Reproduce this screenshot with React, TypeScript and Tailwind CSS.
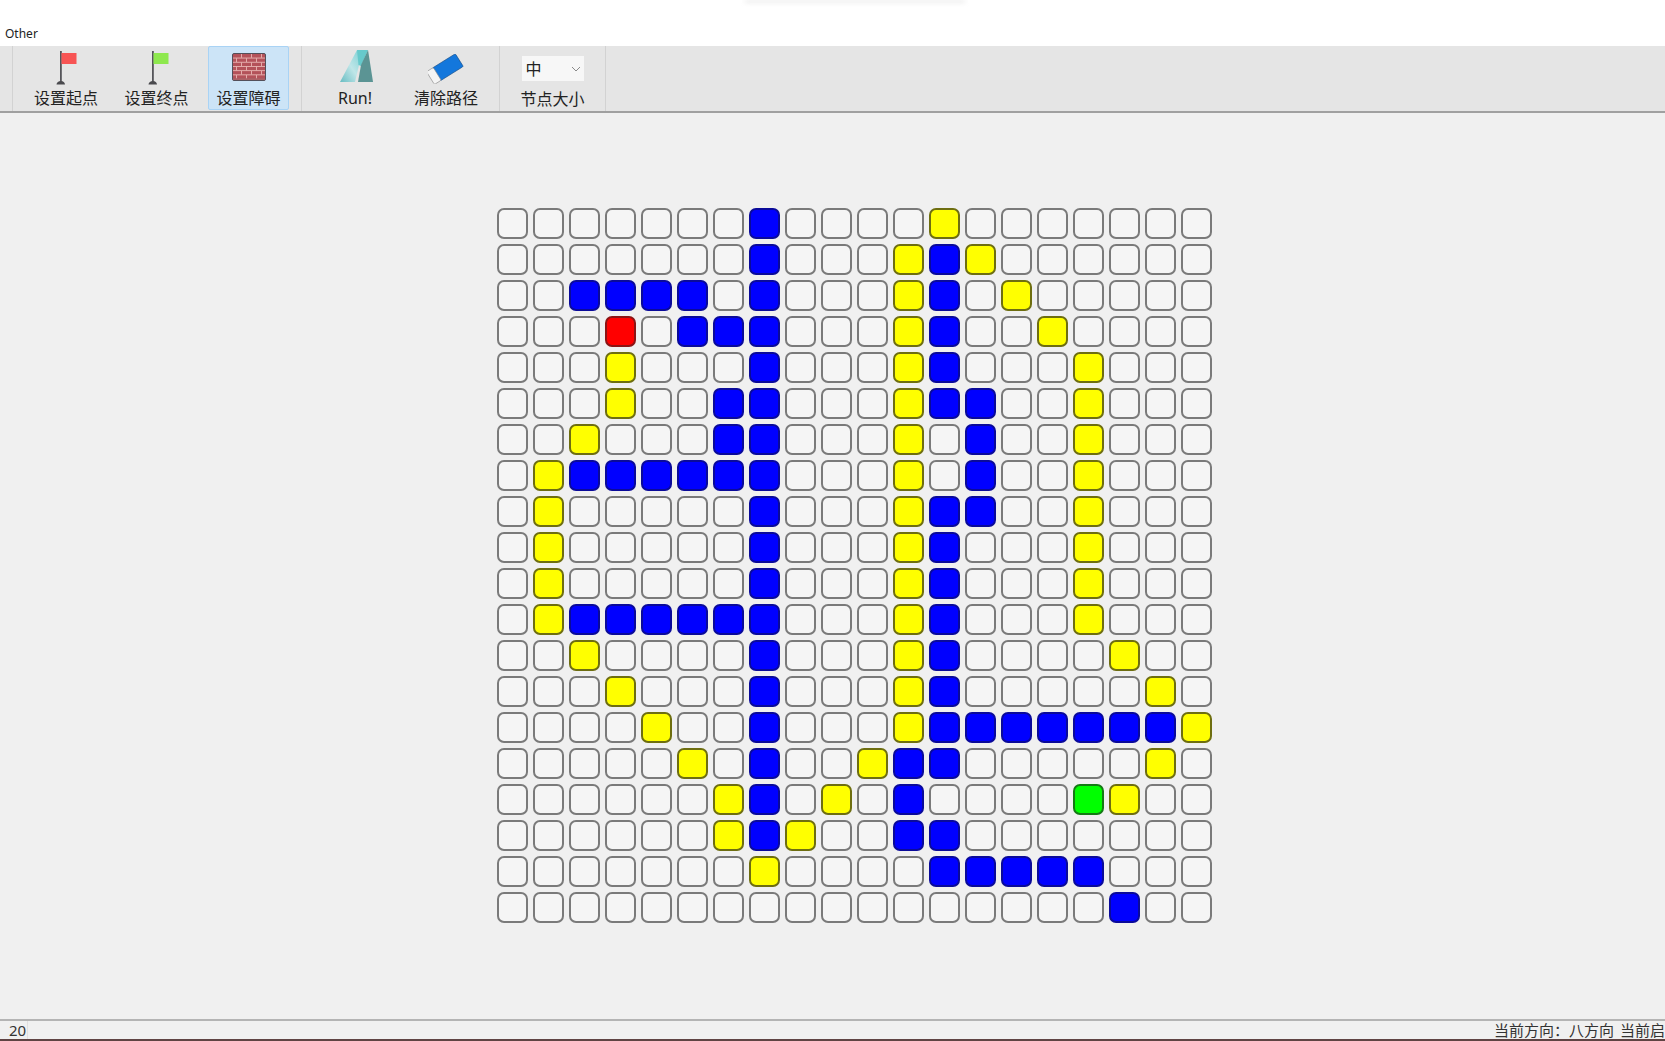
const Y = 'y', B = 'b', R = 'r', G = 'g';

const layout: Record<number, Record<number, string>> = {
  0: { 7: B, 12: Y },
  1: { 7: B, 11: Y, 12: B, 13: Y },
  2: { 2: B, 3: B, 4: B, 5: B, 7: B, 11: Y, 12: B, 14: Y },
  3: { 3: R, 5: B, 6: B, 7: B, 11: Y, 12: B, 15: Y },
  4: { 3: Y, 7: B, 11: Y, 12: B, 16: Y },
  5: { 3: Y, 6: B, 7: B, 11: Y, 12: B, 13: B, 16: Y },
  6: { 2: Y, 6: B, 7: B, 11: Y, 13: B, 16: Y },
  7: { 1: Y, 2: B, 3: B, 4: B, 5: B, 6: B, 7: B, 11: Y, 13: B, 16: Y },
  8: { 1: Y, 7: B, 11: Y, 12: B, 13: B, 16: Y },
  9: { 1: Y, 7: B, 11: Y, 12: B, 16: Y },
  10: { 1: Y, 7: B, 11: Y, 12: B, 16: Y },
  11: { 1: Y, 2: B, 3: B, 4: B, 5: B, 6: B, 7: B, 11: Y, 12: B, 16: Y },
  12: { 2: Y, 7: B, 11: Y, 12: B, 17: Y },
  13: { 3: Y, 7: B, 11: Y, 12: B, 18: Y },
  14: { 4: Y, 7: B, 11: Y, 12: B, 13: B, 14: B, 15: B, 16: B, 17: B, 18: B, 19: Y },
  15: { 5: Y, 7: B, 10: Y, 11: B, 12: B, 18: Y },
  16: { 6: Y, 7: B, 9: Y, 11: B, 16: G, 17: Y },
  17: { 6: Y, 7: B, 8: Y, 11: B, 12: B },
  18: { 7: Y, 12: B, 13: B, 14: B, 15: B, 16: B },
  19: { 17: B },
};

const cellClass: Record<string, string> = {
  e: 'bg-[#f5f5f5] border-[#7a7a7a]',
  y: 'bg-[#ffff00] border-[#6e6e10]',
  b: 'bg-[#0000ff] border-[#0a0a9a]',
  r: 'bg-[#ff0000] border-[#8c1414]',
  g: 'bg-[#00ff00] border-[#147a14]',
};

function Sep() {
  return <div className="w-px self-stretch bg-[#d2d2d2]" />;
}

function Flag({ color }: { color: string }) {
  return (
    <svg width="24" height="34" viewBox="0 0 24 34">
      <rect x="4" y="0" width="1.8" height="33" fill="#55555a" />
      <rect x="5.5" y="2" width="15" height="11" fill={color} />
      <path d="M0.5 33.5 Q1 30 4.9 30 Q8.6 30 9 33.5 Z" fill="#4a4a4e" />
    </svg>
  );
}

function Brick() {
  const rows = [0, 1, 2, 3, 4, 5];
  return (
    <svg width="34" height="28" viewBox="0 0 34 28">
      <rect x="0.5" y="0.5" width="33" height="27" rx="1.5" fill="#b4525a" stroke="#54505a" />
      {rows.map((r) => (
        <rect key={r} x="1" y={4.6 + r * 4.2} width="32" height="0.9" fill="#e9b6b4" />
      ))}
      {rows.map((r) =>
        [0, 1, 2].map((c) => (
          <rect key={`${r}-${c}`} x={(r % 2 ? 4 : 9) + c * 10} y={1 + r * 4.2} width="0.9" height="3.8" fill="#e9b6b4" />
        )),
      )}
      <rect x="1" y="25" width="32" height="2" fill="#8d3f48" opacity="0.5" />
    </svg>
  );
}

function RunLogo() {
  return (
    <svg width="34" height="34" viewBox="0 0 34 34">
      <defs>
        <linearGradient id="runA" x1="0" y1="1" x2="1" y2="0">
          <stop offset="0" stopColor="#68bcc2" />
          <stop offset="0.5" stopColor="#bfe6e8" />
          <stop offset="1" stopColor="#7cd0d4" />
        </linearGradient>
      </defs>
      <path d="M0 33 L17 1 L21 1 L19 16 L15 33 Z" fill="url(#runA)" />
      <path d="M17 1 L28 1 L21 17 L18.5 16 Z" fill="#66c9cb" />
      <path d="M28 1 L33 33 L18 33 L21 16 Z" fill="#5b9494" />
    </svg>
  );
}

function Eraser() {
  return (
    <svg width="36" height="30" viewBox="0 0 36 30">
      <g transform="rotate(-32 18 15)">
        <rect x="7" y="7" width="27" height="15" rx="1" fill="#1377dc" stroke="#1a4f86" strokeWidth="0.6" />
        <rect x="0" y="7" width="8" height="15" rx="1.2" fill="#f4f4f4" stroke="#8a8a8a" strokeWidth="0.6" />
      </g>
    </svg>
  );
}

function ToolButton({
  width,
  label,
  active,
  margin,
  children,
}: {
  width: string;
  label: string;
  active?: boolean;
  margin?: string;
  children: React.ReactNode;
}) {
  return (
    <div
      className={`${width} ${margin ?? ''} flex flex-col items-center border ${
        active ? 'h-[64px] rounded-[2px] border-[#a9d3f5] bg-[#cce4f7]' : 'h-full border-transparent'
      }`}
    >
      <div className={`flex ${active ? 'h-[41px]' : 'h-[40px]'} w-full items-end justify-center pb-[1px]`}>{children}</div>
      <span className="text-[16px] leading-[22px] text-[#222]">{label}</span>
    </div>
  );
}

export default function App() {
  return (
    <div
      className="relative flex h-[1041px] w-full flex-col overflow-hidden bg-[#f0f0f0]"
      style={{ fontFamily: '"Noto Sans", "Noto Sans CJK SC", sans-serif' }}
    >
      <div className="absolute left-[745px] top-0 h-[3px] w-[220px] bg-[#ececec] blur-[2px]" />

      <div className="flex h-[46px] shrink-0 items-end bg-white pb-[3px] pl-[5px]">
        <span className="text-[12px] leading-[18px] text-[#222]">Other</span>
      </div>

      <div className="flex h-[67px] shrink-0 items-stretch border-b-2 border-[#a0a0a0] bg-[#e5e5e5] pl-[12px]">
        <Sep />
        <ToolButton width="w-[90px]" margin="ml-[8px]" label="设置起点">
          <div className="mb-[1px] mr-[-4px]"><Flag color="#f75454" /></div>
        </ToolButton>
        <ToolButton width="w-[91px]" label="设置终点">
          <div className="mb-[1px] mr-[-6px]"><Flag color="#8ee84e" /></div>
        </ToolButton>
        <ToolButton width="w-[81px]" margin="ml-[6px]" active label="设置障碍">
          <div className="mb-[5px]"><Brick /></div>
        </ToolButton>
        <div className="ml-[12px] flex"><Sep /></div>
        <ToolButton width="w-[106px]" label="Run!">
          <div className="mb-[3px] ml-[4px]"><RunLogo /></div>
        </ToolButton>
        <ToolButton width="w-[76px]" label="清除路径">
          <div className="mb-[2px]"><Eraser /></div>
        </ToolButton>
        <div className="ml-[15px] flex"><Sep /></div>
        <div className="flex w-[105px] flex-col items-center">
          <div className="mt-[10px] flex h-[25px] w-[62px] items-center justify-between bg-[#f7f7f7] pl-[4px] pr-[3px]">
            <span className="text-[16px] leading-[22px] text-[#222]">中</span>
            <svg width="10" height="6" viewBox="0 0 10 6" fill="none" stroke="#8a8a8a" strokeWidth="1">
              <path d="M1 1 L5 5 L9 1" />
            </svg>
          </div>
          <span className="mt-[7px] text-[16px] leading-[22px] text-[#222]">节点大小</span>
        </div>
        <Sep />
      </div>

      <main className="flex-1 pl-[497px] pt-[95px]">
        <div className="grid w-max grid-cols-[repeat(20,31px)] grid-rows-[repeat(20,31px)] gap-[5px]">
          {Array.from({ length: 20 }, (_, r) =>
            Array.from({ length: 20 }, (_, c) => (
              <div
                key={`${r}-${c}`}
                className={`rounded-[7px] border-2 ${cellClass[layout[r]?.[c] ?? 'e']}`}
              />
            )),
          )}
        </div>
      </main>

      <div className="flex h-[22px] shrink-0 flex-col border-t-2 border-[#b4b4b4] bg-[#f0f0f0]">
        <div className="flex flex-1 items-center overflow-hidden whitespace-nowrap text-[15px] leading-[18px] text-[#333]">
          <span className="w-[28px] self-stretch border-r border-[#e0e0e0] pl-[9px]">20</span>
          <span className="ml-auto">当前方向：八方向</span>
          <span className="ml-[6px]">当前启</span>
        </div>
        <div className="h-[2px] bg-[#5f4343]" />
      </div>
    </div>
  );
}
